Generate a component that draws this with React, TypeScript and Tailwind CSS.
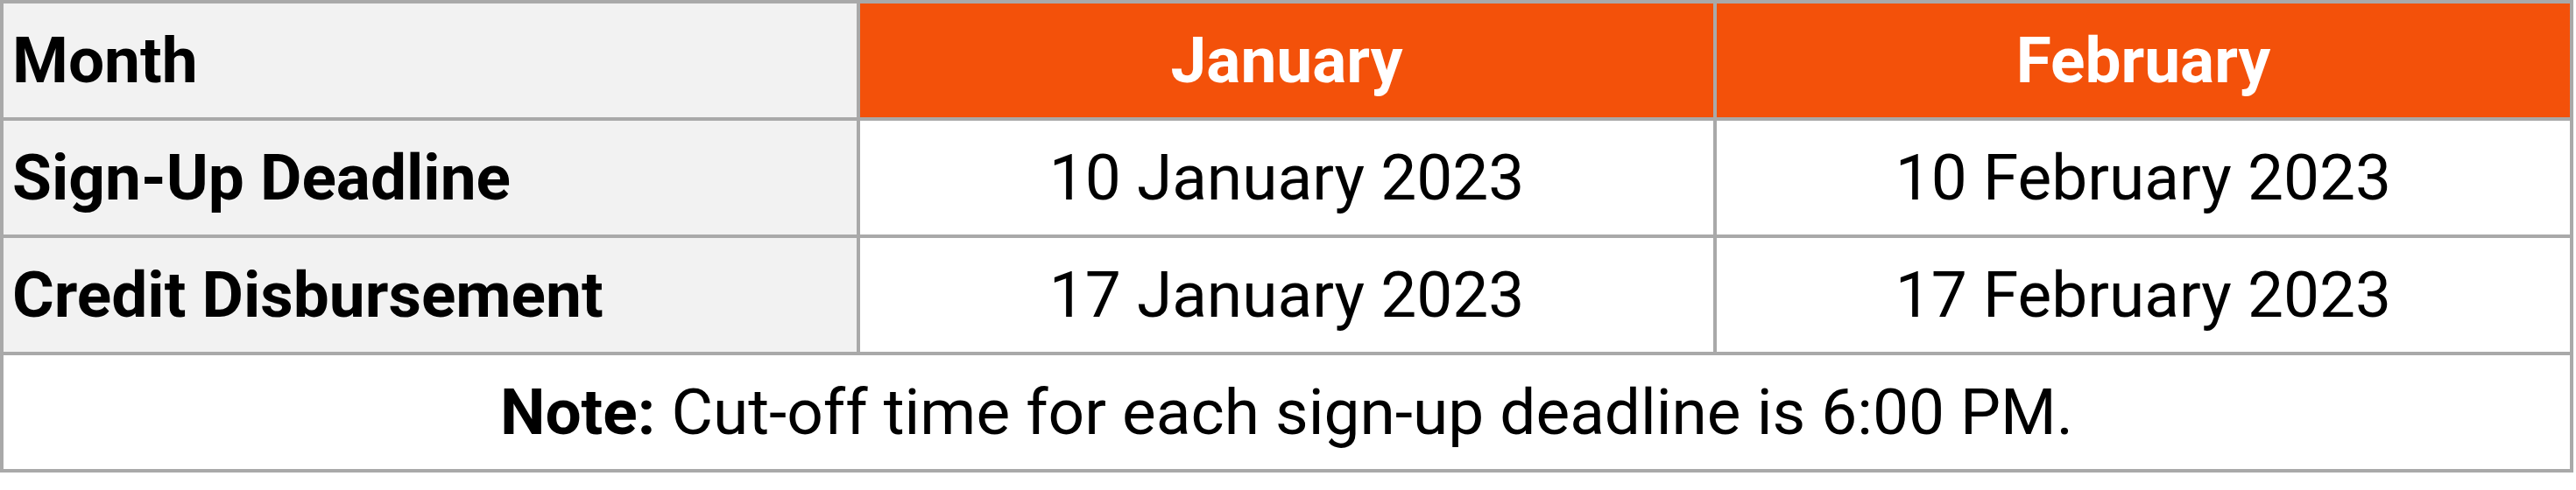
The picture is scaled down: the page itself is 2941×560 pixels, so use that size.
import { Fragment } from "react";

export default function App() {
  const rows = [
    { label: "Sign-Up Deadline", jan: "10 January 2023", feb: "10 February 2023" },
    { label: "Credit Disbursement", jan: "17 January 2023", feb: "17 February 2023" },
  ];

  return (
    <div className="bg-white w-[2941px] h-[560px]" style={{ fontFamily: "Roboto, 'Liberation Sans', sans-serif" }}>
      <div className="w-[2938px] grid grid-cols-3 gap-[4px] p-[4px] bg-[#a9a9a9] text-[73px] leading-none text-black">
        <div className="h-[130px] bg-[#f2f2f2] flex items-center pl-[10px] font-bold">Month</div>
        <div className="h-[130px] bg-[#f3510a] flex items-center justify-center font-bold text-white">January</div>
        <div className="h-[130px] bg-[#f3510a] flex items-center justify-center font-bold text-white">February</div>

        {rows.map((r) => (
          <Fragment key={r.label}>
            <div className="h-[130px] bg-[#f2f2f2] flex items-center pl-[10px] font-bold">{r.label}</div>
            <div className="h-[130px] bg-white flex items-center justify-center">{r.jan}</div>
            <div className="h-[130px] bg-white flex items-center justify-center">{r.feb}</div>
          </Fragment>
        ))}

        <div className="col-span-3 h-[130px] bg-white flex items-center justify-center">
          <span>
            <span className="font-bold">Note:</span> Cut-off time for each sign-up deadline is 6:00 PM.
          </span>
        </div>
      </div>
    </div>
  );
}
